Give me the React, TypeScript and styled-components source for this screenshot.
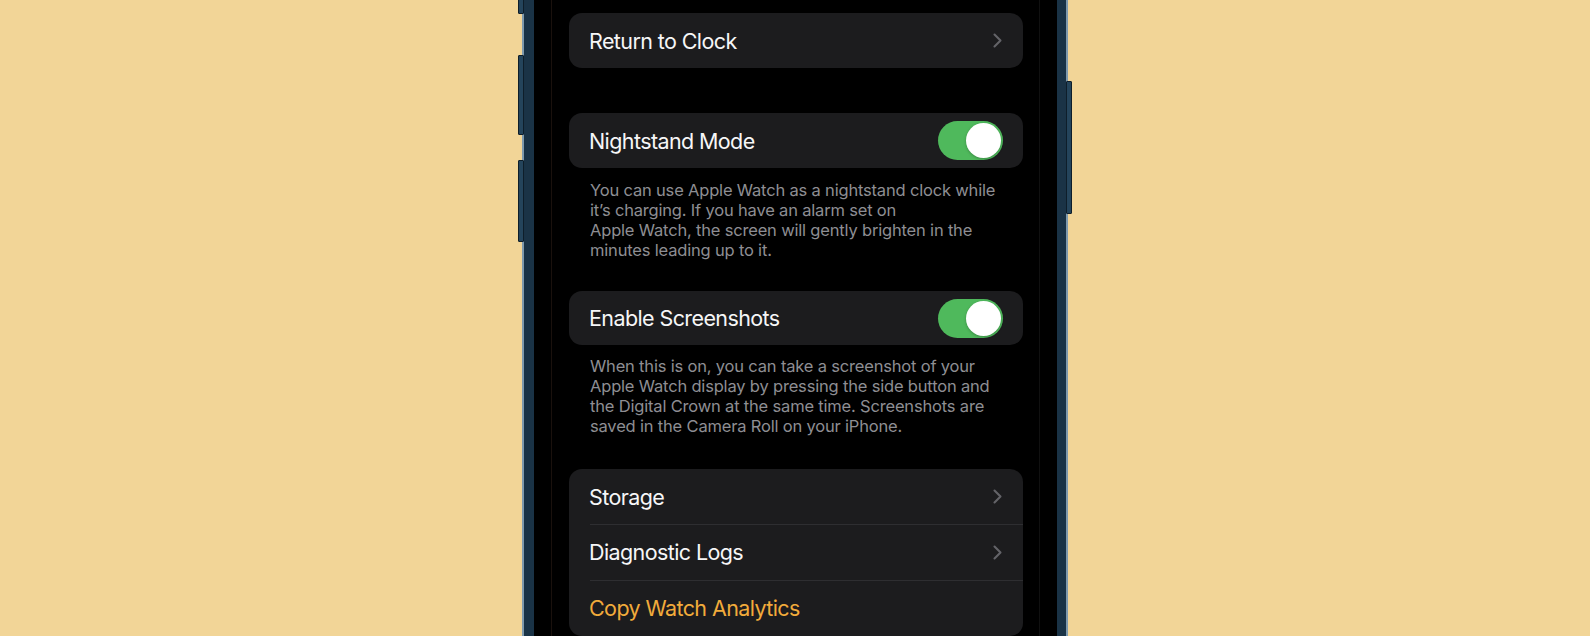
import React from 'react';
import styled, { createGlobalStyle } from 'styled-components';

const GlobalStyle = createGlobalStyle`
    html, body {
        margin: 0;
        padding: 0;
        background: #f2d597;
    }
    body {
        font-family: Inter, "Noto Sans", "Liberation Sans", sans-serif;
        -webkit-font-smoothing: antialiased;
    }
`;

const Page = styled.div`
    display: flex;
    justify-content: center;
    height: 636px;
    overflow: hidden;
    background: #f2d597;
`;

const Phone = styled.div`
    position: relative;
    width: 546px;
    height: 100%;
    box-sizing: border-box;
    padding: 0 9px 0 10px;
    background: #1a3346;
    border-left: 2px solid #7f9aad;
    border-right: 2px solid #7f9aad;
`;

const SideButton = styled.div<{ side: 'left' | 'right'; top: number; h: number }>`
    position: absolute;
    ${(p) => (p.side === 'left' ? 'left: -6px;' : 'right: -6px;')}
    top: ${(p) => p.top}px;
    width: 4px;
    height: ${(p) => p.h}px;
    background: #24445b;
    border: 1px solid #0e1e2a;
    border-radius: 1px;
`;

const Screen = styled.div`
    height: 100%;
    background: #000;
    padding: 0 17px;
    box-sizing: border-box;
`;

const Display = styled.div`
    height: 100%;
    box-sizing: border-box;
    border-left: 1px solid #1a110d;
    border-right: 1px solid #101010;
    padding: 13px 16px 0 17px;
    display: flex;
    flex-direction: column;
`;

const Group = styled.div<{ gap?: number }>`
    background: #1c1c1e;
    border-radius: 13px;
    overflow: hidden;
    flex-shrink: 0;
    margin-top: ${(p) => p.gap ?? 0}px;
`;

const Row = styled.div<{ h?: number }>`
    display: flex;
    align-items: center;
    justify-content: space-between;
    height: ${(p) => p.h ?? 55}px;
    padding: 0 19px 0 20px;
    position: relative;

    &:not(:first-child)::before {
        content: '';
        position: absolute;
        top: 0;
        left: 21px;
        right: 0;
        height: 1px;
        background: #2e2e31;
    }
`;

const Label = styled.span<{ accent?: boolean }>`
    font-size: 21.5px;
    letter-spacing: -0.6px;
    color: ${(p) => (p.accent ? '#f2ab3b' : '#f6f6f7')};
`;

const Footnote = styled.p<{ gap?: number }>`
    margin: ${(p) => p.gap ?? 11}px 0 0;
    padding: 0 20px 0 21px;
    font-size: 16.5px;
    line-height: 20px;
    letter-spacing: -0.18px;
    color: #8e8e93;
`;

const Track = styled.div`
    width: 65px;
    height: 39px;
    border-radius: 20px;
    background: #4fb95c;
    display: flex;
    align-items: center;
    justify-content: flex-end;
    padding: 0 2px;
    box-sizing: border-box;
    margin-right: 1px;
`;

const Knob = styled.div`
    width: 35px;
    height: 35px;
    border-radius: 50%;
    background: #fff;
    box-shadow: 0 1px 3px rgba(0, 0, 0, 0.25);
`;

const Chevron = () => (
    <svg width="11" height="15" viewBox="0 0 11 15" style={{ marginRight: 1 }}>
        <path
            d="M2.5 1.5 L8.5 7.5 L2.5 13.5"
            fill="none"
            stroke="#636368"
            strokeWidth="2.1"
            strokeLinecap="round"
            strokeLinejoin="round"
        />
    </svg>
);

const Toggle = () => (
    <Track>
        <Knob />
    </Track>
);

const App = () => {
    return (
        <Page>
            <GlobalStyle />
            <Phone>
                <SideButton side="left" top={-4} h={16} />
                <SideButton side="left" top={55} h={78} />
                <SideButton side="left" top={160} h={80} />
                <SideButton side="right" top={81} h={131} />
                <Screen>
                    <Display>
                        <Group>
                            <Row>
                                <Label>Return to Clock</Label>
                                <Chevron />
                            </Row>
                        </Group>

                        <Group gap={45}>
                            <Row>
                                <Label>Nightstand Mode</Label>
                                <Toggle />
                            </Row>
                        </Group>
                        <Footnote gap={12}>
                            You can use Apple Watch as a nightstand clock while
                            <br />
                            it’s charging. If you have an alarm set on
                            <br />
                            Apple Watch, the screen will gently brighten in the
                            <br />
                            minutes leading up to it.
                        </Footnote>

                        <Group gap={31}>
                            <Row h={54}>
                                <Label>Enable Screenshots</Label>
                                <Toggle />
                            </Row>
                        </Group>
                        <Footnote>
                            When this is on, you can take a screenshot of your
                            <br />
                            Apple Watch display by pressing the side button and
                            <br />
                            the Digital Crown at the same time. Screenshots are
                            <br />
                            saved in the Camera Roll on your iPhone.
                        </Footnote>

                        <Group gap={33}>
                            <Row>
                                <Label>Storage</Label>
                                <Chevron />
                            </Row>
                            <Row h={56}>
                                <Label>Diagnostic Logs</Label>
                                <Chevron />
                            </Row>
                            <Row h={56}>
                                <Label accent>Copy Watch Analytics</Label>
                            </Row>
                        </Group>
                    </Display>
                </Screen>
            </Phone>
        </Page>
    );
};

export default App;
